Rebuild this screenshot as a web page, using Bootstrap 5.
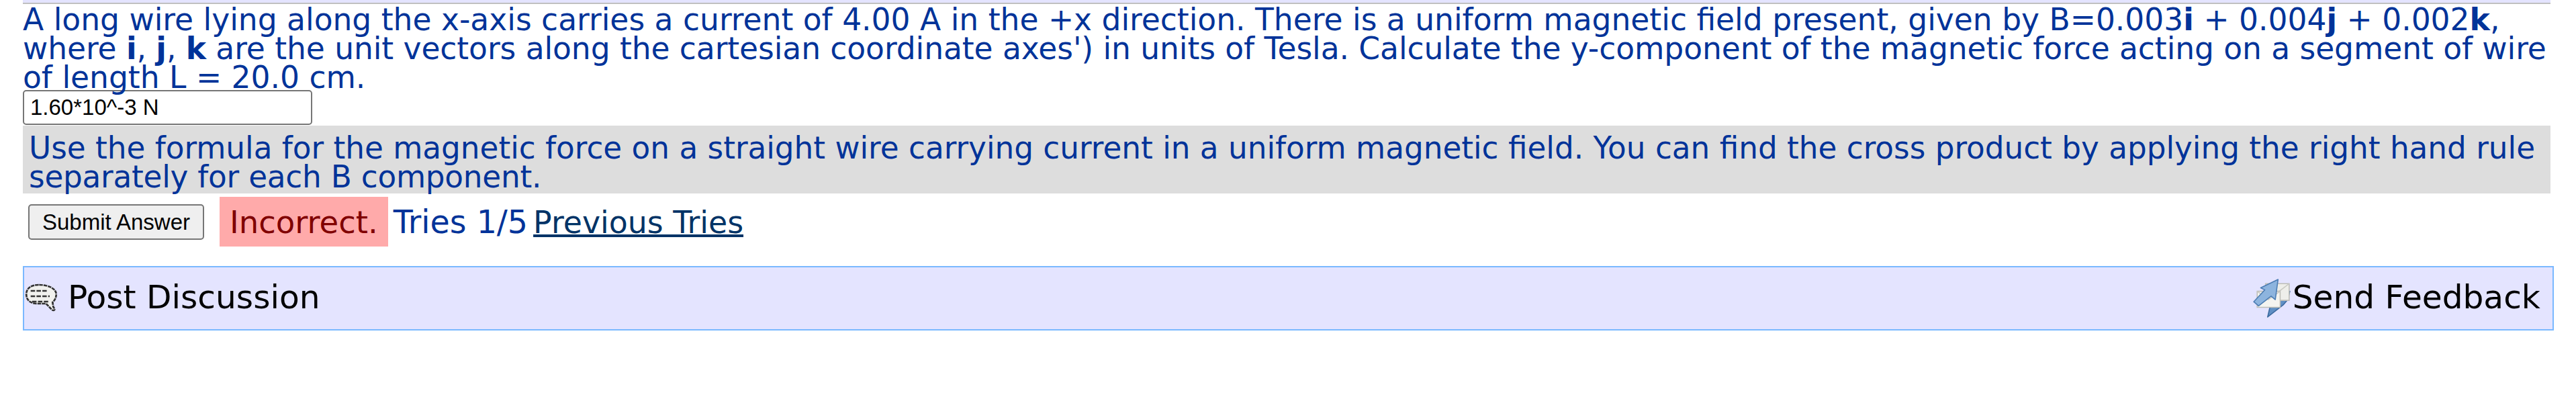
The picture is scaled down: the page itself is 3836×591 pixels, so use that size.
<!DOCTYPE html>
<html lang="en"><head><meta charset="utf-8"><title>Problem</title>
<link href="https://cdn.jsdelivr.net/npm/bootstrap@5.3.0/dist/css/bootstrap.min.css" rel="stylesheet">
<style>
html,body{background:#fff;}
body{font-family:"DejaVu Sans",sans-serif;color:#039;overflow:hidden;}
.sheet{padding:0 38px 0 34px;}
.topstrip{height:6px;background:#e4e4ff;border-bottom:2px solid #c0c0c0;}
.qtext{font-size:45.55px;line-height:43px;padding-top:2px;}
.tightline{letter-spacing:-.07px;}
.answer-box{font-family:"Liberation Sans",sans-serif;font-size:33px;width:431px;height:52px;padding:0 9px;border:2px solid #767676;border-radius:5px;color:#000;display:block;margin-top:-3px;line-height:1;}
.hintbox{background:#ddd;font-size:45.3px;line-height:43px;padding:12px 9px 3px;height:101px;margin-top:1px;}
.hinttail{letter-spacing:-.22px;}
.submitline{height:74px;margin-top:5px;font-size:46.5px;}
.sendbtn{font-family:"Liberation Sans",sans-serif;font-size:33px;width:262px;height:53px;margin-left:8px;background:#efefef;border:2px solid #767676;border-radius:5px;color:#000;padding:0;}
.verdict{background:#faa;color:#800000;height:74px;padding:1px 15px 0;margin-left:23px;margin-right:8px;line-height:74px;}
.tally{font-size:47.5px;padding-top:2px;}
.prior{color:#036;margin-left:8px;text-decoration-thickness:4px;font-size:45.8px;padding-top:2px;}
.feedback-bar{margin-top:29px;margin-right:-5px;height:96px;background:#e4e4ff;border:2px solid #7ab8ff;font-size:48.6px;color:#000;padding:0 18px 0 1px;}
.feedback-bar a{color:#000;text-decoration:none;}
.feedback-bar span{padding-bottom:3px;}
.postlink{gap:14px;}
.sendlink{gap:2px;}
</style></head><body>
<div class="sheet">
<div class="topstrip"></div>
<div class="qtext">A long wire lying along the x-axis carries a current of 4.00 A in the +x direction. There is a uniform magnetic field present, given by B=0.003<b>i</b> + 0.004<b>j</b> + 0.002<b>k</b>, <span class="tightline">where <b>i</b>, <b>j</b>, <b>k</b> are the unit vectors along the cartesian coordinate axes') in units of Tesla. Calculate the y-component of the magnetic force acting on a segment of wire</span> of length L = 20.0 cm.</div>
<input class="answer-box" type="text" value="1.60*10^-3 N" aria-label="Answer">
<div class="hintbox">Use the formula for the magnetic force on a straight wire carrying current in a uniform magnetic field. You can find the cross product by applying the right hand rule <span class="hinttail">separately for each B component.</span></div>
<div class="submitline d-flex align-items-center">
<button class="sendbtn" type="button">Submit Answer</button>
<span class="verdict">Incorrect.</span><span class="tally">Tries 1/5</span><a class="prior" href="#">Previous Tries</a>
</div>
<div class="feedback-bar d-flex justify-content-between align-items-center">
<a href="#" class="postlink d-flex align-items-center">
<svg width="50" height="46" viewBox="0 0 46 46" preserveAspectRatio="none" aria-hidden="true"><path d="M19 3C9 3 2 8 2 17s6 14 15 14h12l8 9c2 2 4 1 4-1l-2-3-1-7c3-3 5-7 5-12C43 8 31 3 19 3Z" fill="#f1f1ee" stroke="#333" stroke-width="2.5" stroke-dasharray="5 1"/><path d="M8 12h24M8 20h26M10 28h22" stroke="#333" stroke-width="2.5" stroke-dasharray="6 2"/></svg>
<span>Post Discussion</span></a>
<a href="#" class="sendlink d-flex align-items-center">
<svg width="58" height="58" viewBox="0 0 54 56" aria-hidden="true"><path d="M21 55 24 42 36 33 36 25 53 18 50 30 44 37 Z" fill="#5f8fc4" stroke="#3b6a9f" stroke-width="1.5" stroke-linejoin="round"/><path d="M18 7h34v24H18Z" fill="#eeeeea" stroke="#bdbdb7" stroke-width="1.5"/><path d="M18 7l17 13 17-13" fill="none" stroke="#c9c9c3" stroke-width="1.5"/><path d="M6 18h33v23H6Z" fill="#f4f4f0" stroke="#bdbdb7" stroke-width="1.5"/><path d="M6 18l16 12 17-12" fill="none" stroke="#c9c9c3" stroke-width="1.5"/><path d="M36 1 32 30 26 25 8 39 1 33 17 16 11 13Z" fill="#8db4de" stroke="#4b7cb3" stroke-width="1.5" stroke-linejoin="round"/></svg>
<span>Send Feedback</span></a>
</div>
</div>
<script src="https://cdn.jsdelivr.net/npm/bootstrap@5.3.0/dist/js/bootstrap.bundle.min.js"></script>
</body></html>
